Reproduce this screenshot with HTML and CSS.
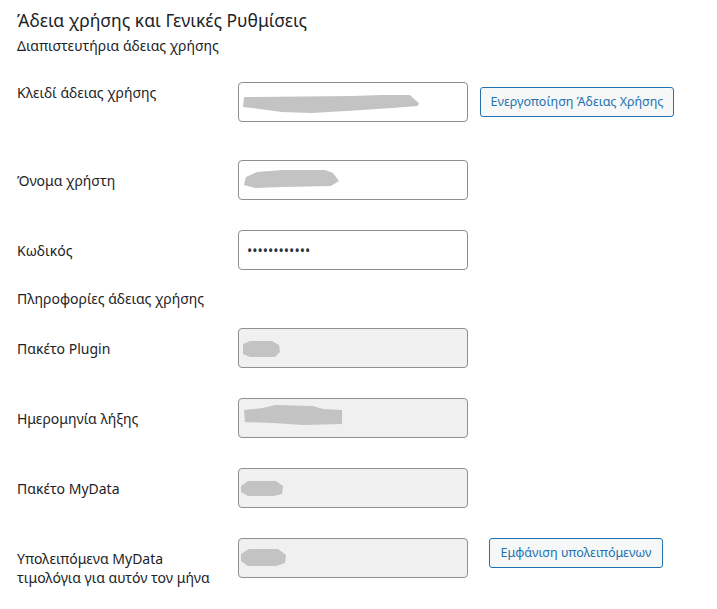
FILE: index.html
```html
<!DOCTYPE html>
<html lang="el">
<head>
<meta charset="utf-8">
<title>Άδεια χρήσης και Γενικές Ρυθμίσεις</title>
<link rel="stylesheet" href="styles.css">
</head>
<body>
<div class="page">
  <h2 class="title">Άδεια χρήσης και Γενικές Ρυθμίσεις</h2>
  <h3 class="subtitle">Διαπιστευτήρια άδειας χρήσης</h3>

  <div class="form">
    <div class="group">
      <div class="row row-key">
        <label class="label label-top">Κλειδί άδειας χρήσης</label>
        <div class="field">
          <div class="input-wrap">
            <input class="input" type="text" value="">
            <svg class="redact redact-key" width="178" height="20" viewBox="0 0 178 20"><path d="M2 3 L110 2 L140 1 L168 1 L172 5 L177 9 L176 12 L150 14 L120 16 L70 19 L40 18 L10 14 L1 13 Z" fill="#c3c3c3"/></svg>
          </div>
          <button class="btn btn-activate" type="button">Ενεργοποίηση Άδειας Χρήσης</button>
        </div>
      </div>

      <div class="row">
        <label class="label">Όνομα χρήστη</label>
        <div class="field">
          <div class="input-wrap">
            <input class="input" type="text" value="">
            <svg class="redact redact-user" width="97" height="20" viewBox="0 0 97 20"><path d="M3 8 L14 3 L40 1 L82 1 L90 4 L96 12 L88 17 L40 18 L12 19 L1 16 Z" fill="#c3c3c3"/></svg>
          </div>
        </div>
      </div>

      <div class="row">
        <label class="label">Κωδικός</label>
        <div class="field">
          <div class="input-wrap">
            <input class="input input-pass" type="password" value="abcdefghijkl">
          </div>
        </div>
      </div>
    </div>

    <h3 class="section">Πληροφορίες άδειας χρήσης</h3>

    <div class="group">
      <div class="row">
        <label class="label">Πακέτο Plugin</label>
        <div class="field">
          <div class="input-wrap">
            <input class="input input-ro" type="text" value="" readonly>
            <svg class="redact redact-plugin" width="39" height="18" viewBox="0 0 39 18"><path d="M1 4 L8 1 L30 1 L37 5 L38 12 L33 17 L8 17 L1 14 Z" fill="#c3c3c3"/></svg>
          </div>
        </div>
      </div>

      <div class="row">
        <label class="label">Ημερομηνία λήξης</label>
        <div class="field">
          <div class="input-wrap">
            <input class="input input-ro" type="text" value="" readonly>
            <svg class="redact redact-date" width="100" height="22" viewBox="0 0 100 22"><path d="M1 6 L20 4 L32 1 L70 2 L80 5 L99 6 L99 20 L60 21 L30 19 L2 18 Z" fill="#c3c3c3"/></svg>
          </div>
        </div>
      </div>

      <div class="row">
        <label class="label">Πακέτο MyData</label>
        <div class="field">
          <div class="input-wrap">
            <input class="input input-ro" type="text" value="" readonly>
            <svg class="redact redact-mydata" width="44" height="17" viewBox="0 0 44 17"><path d="M1 6 L8 1 L36 1 L43 6 L42 14 L34 16 L8 16 L1 12 Z" fill="#c3c3c3"/></svg>
          </div>
        </div>
      </div>

      <div class="row">
        <label class="label">Υπολειπόμενα MyData τιμολόγια για αυτόν τον μήνα</label>
        <div class="field field-top">
          <div class="input-wrap">
            <input class="input input-ro" type="text" value="" readonly>
            <svg class="redact redact-remain" width="47" height="19" viewBox="0 0 47 19"><path d="M1 6 L9 1 L38 1 L46 7 L45 15 L36 18 L8 18 L1 13 Z" fill="#c3c3c3"/></svg>
          </div>
          <button class="btn btn-show" type="button">Εμφάνιση υπολειπόμενων</button>
        </div>
      </div>
    </div>
  </div>
</div>
</body>
</html>
```

FILE: styles.css
```css
html, body {
  margin: 0;
  padding: 0;
  background: #ffffff;
}

.page {
  padding: 8px 0 0 17px;
  font-family: "Noto Sans", "Open Sans", "DejaVu Sans", sans-serif;
  color: #1d2327;
}

.title {
  margin: 0;
  font-size: 17.5px;
  line-height: 24px;
  font-weight: 400;
}

.subtitle {
  margin: 4px 0 0;
  font-size: 14px;
  line-height: 20px;
  font-weight: 400;
}

.form {
  margin-top: 26px;
}

.group {
  display: flex;
  flex-direction: column;
  gap: 30px;
}

.row {
  display: flex;
  align-items: flex-start;
}

.row-key {
  margin-bottom: 8px;
}

.label {
  box-sizing: border-box;
  width: 221px;
  flex: none;
  padding: 11px 21px 0 0;
  font-size: 14px;
  line-height: 19px;
}

.label-top {
  padding-top: 1px;
}

.field {
  display: flex;
  align-items: center;
}

.field-top {
  align-items: flex-start;
}

.input-wrap {
  position: relative;
  width: 230px;
  height: 40px;
}

.input {
  box-sizing: border-box;
  width: 230px;
  height: 40px;
  margin: 0;
  padding: 0 8px;
  border: 1px solid #8c8f94;
  border-radius: 4px;
  background: #ffffff;
  font-family: inherit;
  font-size: 14px;
  color: #2c3338;
  outline: none;
}

.input-ro {
  background: #f0f0f1;
}

.input-pass {
  font-size: 14px;
  letter-spacing: 0;
}

.redact {
  position: absolute;
  display: block;
}

.redact-key { left: 4px; top: 12px; }
.redact-user { left: 5px; top: 9px; }
.redact-plugin { left: 4px; top: 12px; }
.redact-date { left: 5px; top: 6px; }
.redact-mydata { left: 2px; top: 12px; }
.redact-remain { left: 2px; top: 10px; }

.btn {
  box-sizing: border-box;
  height: 30px;
  padding: 0 8px;
  border: 1px solid #2271b1;
  border-radius: 3px;
  background: #f6f7f7;
  color: #2271b1;
  font-family: inherit;
  font-size: 12.5px;
  line-height: 28px;
  white-space: nowrap;
  cursor: pointer;
}

.btn-activate {
  margin-left: 12px;
  width: 194px;
}

.btn-show {
  margin-left: 21px;
  width: 174px;
}

.section {
  margin: 19px 0;
  font-size: 14px;
  line-height: 20px;
  font-weight: 400;
}
```
